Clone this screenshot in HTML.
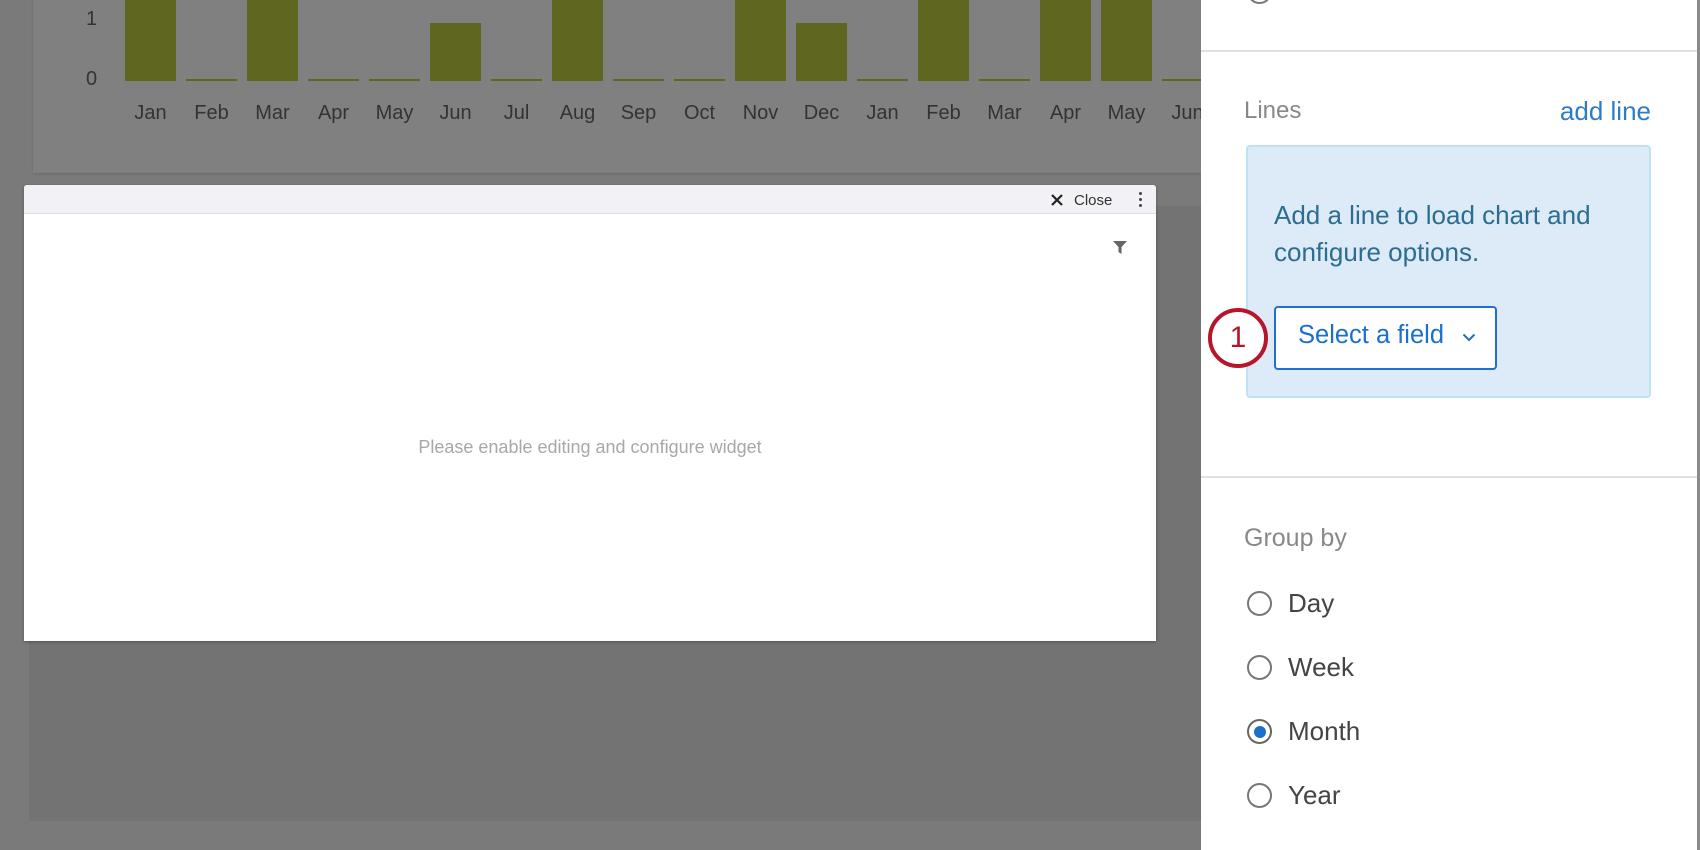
<!DOCTYPE html>
<html><head><meta charset="utf-8"><style>
*{margin:0;padding:0;box-sizing:border-box}
body{width:1700px;height:850px;overflow:hidden;background:#7a7a7a;position:relative;font-family:"Liberation Sans",sans-serif}
.abs{position:absolute}
.card1{left:33px;top:-10px;width:1170px;height:183px;background:#808080;box-shadow:0 1px 2px rgba(0,0,0,.15)}
.card2{left:29px;top:206px;width:1175px;height:615px;background:#737373}
.bar{position:absolute;background:#5f661f;width:51px}
.ml{position:absolute;top:102px;font-size:20px;color:#333;width:61px;text-align:center}
.modal{left:24px;top:185px;width:1132px;height:456px;background:#fff;border-radius:3px 3px 0 0;box-shadow:0 1px 3px rgba(0,0,0,.3)}
.mh{height:29px;background:#f2f2f6;border-bottom:1px solid #ddd;border-radius:3px 3px 0 0;position:relative}
.panel{left:1201px;top:0;width:496px;height:850px;background:#fff}
.edge{left:1697px;top:0;width:3px;height:850px;background:#8a8a8a}
.radio{position:absolute;left:1247px;width:25px;height:25px;border:2px solid #777;border-radius:50%;background:#fff}
.rl{position:absolute;left:1288px;font-size:26px;color:#444}
</style></head><body>
<div class="abs card1"></div>
<div class="abs card2"></div>
<div class="abs" style="left:86px;top:8px;font-size:20px;color:#333">1</div>
<div class="abs" style="left:86px;top:68px;font-size:20px;color:#333">0</div>
<div class="abs" style="left:0;top:0;width:1201px;height:130px">
<div class="bar" style="left:125px;top:0;height:81px"></div>
<div class="bar" style="left:186px;top:79px;height:2px"></div>
<div class="bar" style="left:247px;top:0;height:81px"></div>
<div class="bar" style="left:308px;top:79px;height:2px"></div>
<div class="bar" style="left:369px;top:79px;height:2px"></div>
<div class="bar" style="left:430px;top:23px;height:58px"></div>
<div class="bar" style="left:491px;top:79px;height:2px"></div>
<div class="bar" style="left:552px;top:0;height:81px"></div>
<div class="bar" style="left:613px;top:79px;height:2px"></div>
<div class="bar" style="left:674px;top:79px;height:2px"></div>
<div class="bar" style="left:735px;top:0;height:81px"></div>
<div class="bar" style="left:796px;top:23px;height:58px"></div>
<div class="bar" style="left:857px;top:79px;height:2px"></div>
<div class="bar" style="left:918px;top:0;height:81px"></div>
<div class="bar" style="left:979px;top:79px;height:2px"></div>
<div class="bar" style="left:1040px;top:0;height:81px"></div>
<div class="bar" style="left:1101px;top:0;height:81px"></div>
<div class="bar" style="left:1162px;top:79px;height:2px"></div>
<div class="ml" style="left:120px">Jan</div><div class="ml" style="left:181px">Feb</div><div class="ml" style="left:242px">Mar</div><div class="ml" style="left:303px">Apr</div><div class="ml" style="left:364px">May</div><div class="ml" style="left:425px">Jun</div><div class="ml" style="left:486px">Jul</div><div class="ml" style="left:547px">Aug</div><div class="ml" style="left:608px">Sep</div><div class="ml" style="left:669px">Oct</div><div class="ml" style="left:730px">Nov</div><div class="ml" style="left:791px">Dec</div><div class="ml" style="left:852px">Jan</div><div class="ml" style="left:913px">Feb</div><div class="ml" style="left:974px">Mar</div><div class="ml" style="left:1035px">Apr</div><div class="ml" style="left:1096px">May</div><div class="ml" style="left:1157px">Jun</div>
</div>
<div class="abs modal">
<div class="mh">
<svg class="abs" style="left:1027px;top:9px" width="12" height="12" viewBox="0 0 12 12"><path d="M1 1L11 11M11 1L1 11" stroke="#222" stroke-width="2.2"/></svg>
<div class="abs" style="left:1050px;top:7px;font-size:15px;color:#333">Close</div>
<div class="abs" style="left:1115px;top:7px;width:3px;height:3px;background:#444;border-radius:50%;box-shadow:0 6px 0 #444,0 12px 0 #444"></div>
</div>
<svg class="abs" style="left:1089px;top:56px" width="14" height="14" viewBox="0 0 14 14"><path d="M0 0H14L8.5 6V13L5.5 11V6Z" fill="#666"/></svg>
<div class="abs" style="left:0;width:1132px;top:252px;text-align:center;font-size:18px;color:#a8a8a8">Please enable editing and configure widget</div>
</div>
<div class="abs panel"></div>
<div class="abs edge"></div>
<div class="radio" style="top:-21px"></div>
<div class="abs" style="left:1201px;top:50px;width:496px;height:2px;background:#e0e0e0"></div>
<div class="abs" style="left:1244px;top:97px;font-size:24px;color:#888">Lines</div>
<div class="abs" style="left:1400px;width:251px;text-align:right;top:96px;font-size:26px;color:#2d7cc4">add line</div>
<div class="abs" style="left:1246px;top:145px;width:405px;height:253px;background:#dcebf7;border:2px solid #bde3f2;border-radius:4px"></div>
<div class="abs" style="left:1274px;top:197px;font-size:26px;line-height:37px;color:#2d6d8f">Add a line to load chart and<br>configure options.</div>
<div class="abs" style="left:1274px;top:306px;width:223px;height:64px;background:#fff;border:2px solid #1f70d0;border-radius:4px"></div>
<div class="abs" style="left:1298px;top:321px;font-size:25.5px;color:#1a6fd1">Select a field</div>
<svg class="abs" style="left:1462px;top:333px" width="14" height="9" viewBox="0 0 14 9"><path d="M1.5 1.5L7 7L12.5 1.5" stroke="#1a6fd1" stroke-width="2" fill="none"/></svg>
<div class="abs" style="left:1208px;top:308px;width:60px;height:60px;border:4px solid #b5162a;border-radius:50%;background:#fff;text-align:center;font-size:30px;line-height:52px;color:#b5162a">1</div>
<div class="abs" style="left:1201px;top:476px;width:496px;height:2px;background:#e0e0e0"></div>
<div class="abs" style="left:1244px;top:524px;font-size:25px;color:#888">Group by</div>
<div class="radio" style="top:591px"></div><div class="rl" style="top:588px">Day</div>
<div class="radio" style="top:655px"></div><div class="rl" style="top:652px">Week</div>
<div class="radio" style="top:719px;border-color:#666"><div style="position:absolute;left:4.5px;top:4.5px;width:12px;height:12px;border-radius:50%;background:#1a6fd1"></div></div><div class="rl" style="top:716px">Month</div>
<div class="radio" style="top:783px"></div><div class="rl" style="top:780px">Year</div>
</body></html>
